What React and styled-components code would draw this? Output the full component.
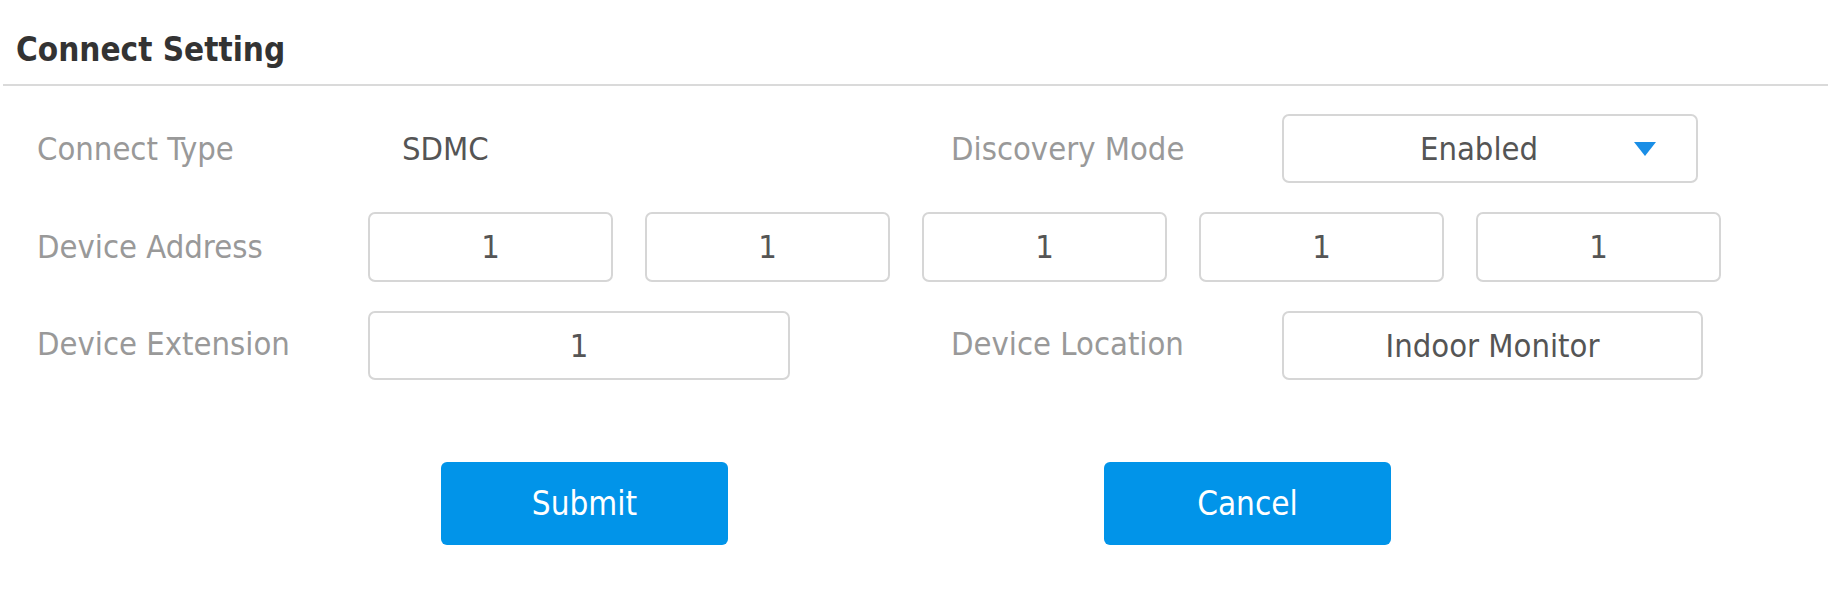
import React from "react";
import styled, { createGlobalStyle } from "styled-components";

const GlobalStyle = createGlobalStyle`
  html, body {
    margin: 0;
    padding: 0;
    background: #ffffff;
  }
  body {
    font-family: "DejaVu Sans Condensed", "DejaVu Sans", Tahoma, sans-serif;
  }
`;

const Page = styled.div`
  width: 1837px;
  min-height: 597px;
  box-sizing: border-box;
`;

const Header = styled.div`
  margin: 0 9px 0 3px;
  padding: 30px 0 14px 13px;
  border-bottom: 2px solid #dadada;
`;

const Title = styled.h2`
  margin: 0;
  font-size: 33px;
  line-height: 40px;
  font-weight: bold;
  color: #333333;
`;

const Form = styled.div`
  display: grid;
  grid-template-columns: 331px 583px 331px 440px;
  grid-template-rows: 69px 70px 69px;
  row-gap: 29px;
  align-items: center;
  margin-top: 28px;
  padding-left: 37px;
`;

const Label = styled.div`
  font-size: 32.5px;
  color: #999999;
  white-space: nowrap;
  margin-top: ${(p) => (p.$up ? "-4px" : "0")};
`;

const StaticValue = styled.div`
  font-size: 32.5px;
  color: #555555;
  padding-left: 34px;
`;

const Field = styled.div`
  box-sizing: border-box;
  width: ${(p) => p.$w}px;
  height: ${(p) => p.$h || 69}px;
  border: 2px solid #d6d6d6;
  border-radius: 7px;
  display: flex;
  align-items: center;
  justify-content: center;
  font-size: 32.5px;
  color: #555555;
  background: #ffffff;
`;

const Select = styled.div`
  box-sizing: border-box;
  width: 416px;
  height: 69px;
  border: 2px solid #d6d6d6;
  border-radius: 7px;
  display: flex;
  align-items: center;
  padding: 0 40px;
  font-size: 32.5px;
  color: #555555;
`;

const SelectText = styled.span`
  flex: 1;
  text-align: center;
`;

const Arrow = styled.svg`
  width: 22px;
  height: 14px;
  flex: none;
  margin-top: 0;
`;

const AddressGroup = styled.div`
  grid-column: 2 / -1;
  display: flex;
  gap: 32px;
`;

const Actions = styled.div`
  display: flex;
  gap: 376px;
  margin-top: 82px;
  padding-left: 441px;
`;

const Button = styled.button`
  width: 287px;
  height: 83px;
  border: none;
  border-radius: 6px;
  background: #0194e9;
  color: #ffffff;
  font-family: inherit;
  font-size: 33px;
  cursor: pointer;
`;

export default function App() {
  const address = ["1", "1", "1", "1", "1"];
  return (
    <Page>
      <GlobalStyle />
      <Header>
        <Title>Connect Setting</Title>
      </Header>
      <Form>
        <Label>Connect Type</Label>
        <StaticValue>SDMC</StaticValue>
        <Label>Discovery Mode</Label>
        <Select>
          <SelectText>Enabled</SelectText>
          <Arrow viewBox="0 0 22 14">
            <path d="M0 0 H22 L11 14 Z" fill="#1a8ee6" />
          </Arrow>
        </Select>

        <Label>Device Address</Label>
        <AddressGroup>
          {address.map((v, i) => (
            <Field key={i} $w={245} $h={70}>
              {v}
            </Field>
          ))}
        </AddressGroup>

        <Label $up>Device Extension</Label>
        <Field $w={422}>1</Field>
        <Label $up>Device Location</Label>
        <Field $w={421}>Indoor Monitor</Field>
      </Form>
      <Actions>
        <Button>Submit</Button>
        <Button>Cancel</Button>
      </Actions>
    </Page>
  );
}
